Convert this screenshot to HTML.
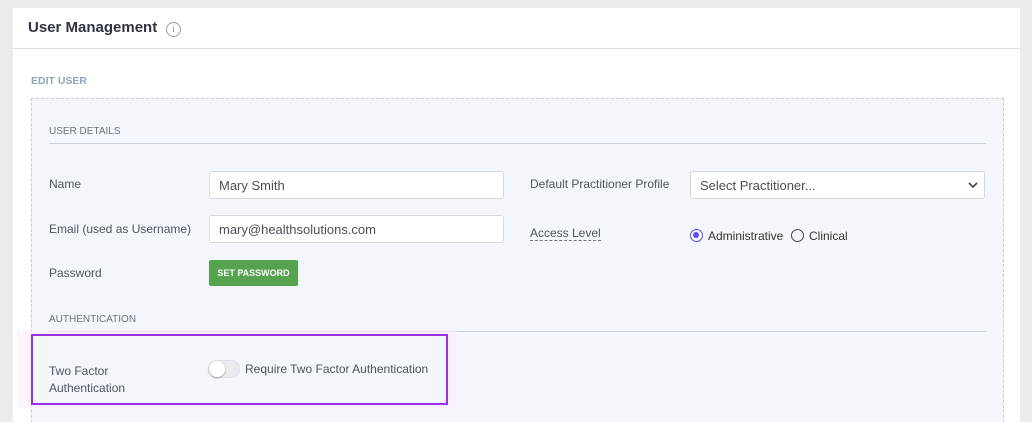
<!DOCTYPE html>
<html><head><style>
*{box-sizing:border-box;margin:0;padding:0}
html,body{width:1032px;height:422px;overflow:hidden}
body{background:#ebebeb;font-family:"Liberation Sans",sans-serif;position:relative;color:#555c66}
.a{position:absolute}
.card{left:13px;top:8px;width:1007px;height:430px;background:#fff}
.hdr{left:13px;top:48px;width:1007px;height:1px;background:#dde0e4}
.lbl{font-size:12px;color:#4f555e}
.inp{background:#fff;border:1px solid #d5d9de;border-radius:3px;height:28px;font-size:13px;color:#4a4f57;padding:6px 9px}
.sec{font-size:10px;color:#6b7280}
</style></head><body>
<div class="a card"></div>
<div class="a" style="left:28px;top:19px;font-size:15px;font-weight:bold;color:#2e3440">User Management</div>
<div class="a" style="left:166px;top:22px;width:15px;height:15px;border:1px solid #999;border-radius:50%;font-size:9px;color:#888;text-align:center;line-height:13px">i</div>
<div class="a hdr"></div>
<div class="a" style="left:31px;top:75px;font-size:10.5px;color:#8fa5b8;font-weight:bold">EDIT USER</div>
<div class="a" style="left:31px;top:98px;width:973px;height:340px;background:#f3f6fa;border:1px dashed #c3ccd6"></div>
<div class="a sec" style="left:49px;top:126px">USER DETAILS</div>
<div class="a" style="left:49px;top:143px;width:937px;height:1px;background:#c9d1dc"></div>
<div class="a lbl" style="left:49px;top:177px">Name</div>
<div class="a inp" style="left:209px;top:171px;width:295px">Mary Smith</div>
<div class="a lbl" style="left:49px;top:222px">Email (used as Username)</div>
<div class="a inp" style="left:209px;top:215px;width:295px">mary@healthsolutions.com</div>
<div class="a lbl" style="left:49px;top:266px">Password</div>
<div class="a" style="left:209px;top:260px;width:89px;height:26px;background:#55a34f;border-radius:2px;color:#fff;font-size:9px;font-weight:bold;text-align:center;line-height:26px">SET PASSWORD</div>
<div class="a lbl" style="left:530px;top:177px">Default Practitioner Profile</div>
<div class="a inp" style="left:690px;top:171px;width:295px">Select Practitioner...</div>
<svg class="a" style="left:968px;top:181px" width="10" height="8"><path d="M1 2l4 4 4-4" fill="none" stroke="#444" stroke-width="1.6"/></svg>
<div class="a lbl" style="left:530px;top:226px;border-bottom:1px dashed #777;line-height:14px">Access Level</div>
<div class="a" style="left:690px;top:229px;width:13px;height:13px;border:1.5px solid #5b50e8;border-radius:50%"><div style="margin:2px;width:6px;height:6px;border-radius:50%;background:#5b50e8"></div></div>
<div class="a" style="left:708px;top:229px;font-size:12px;color:#333">Administrative</div>
<div class="a" style="left:791px;top:229px;width:13px;height:13px;border:1.5px solid #444;border-radius:50%"></div>
<div class="a" style="left:809px;top:229px;font-size:12px;color:#333">Clinical</div>
<div class="a sec" style="left:49px;top:314px">AUTHENTICATION</div>
<div class="a" style="left:49px;top:331px;width:937px;height:1px;background:#c9d1dc"></div>
<div class="a" style="left:17px;top:330px;width:440px;height:78px;background:#fbeefb;opacity:.6"></div>
<div class="a" style="left:31px;top:334px;width:417px;height:71px;border:2px solid #9b30e8;background:#f3f6fa"></div>
<div class="a lbl" style="left:49px;top:363px;line-height:17px">Two Factor<br>Authentication</div>
<div class="a" style="left:208px;top:360px;width:32px;height:18px;border-radius:9px;background:#e9ecef;border:1px solid #dde"><div style="width:16px;height:16px;border-radius:50%;background:#fff;box-shadow:0 1px 2px rgba(0,0,0,.3)"></div></div>
<div class="a lbl" style="left:245px;top:362px">Require Two Factor Authentication</div>
</body></html>
